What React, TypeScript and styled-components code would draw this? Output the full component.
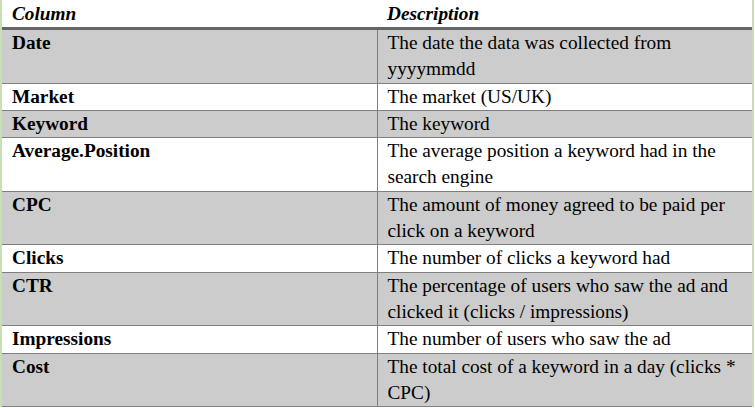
import React from "react";
import styled, { createGlobalStyle } from "styled-components";

const GlobalStyle = createGlobalStyle`
  body {
    margin: 0;
    background: #ffffff;
  }
`;

const Frame = styled.div`
  width: 750px;
  border-left: 2px solid #c5e0b3;
  border-right: 2px solid #c5e0b3;
`;

const Table = styled.table`
  width: 100%;
  table-layout: fixed;
  border-collapse: collapse;
  color: #000;
`;

const HeadCell = styled.th`
  font-family: "Liberation Serif", serif;
  font-size: 19.3px;
  font-style: italic;
  font-weight: bold;
  line-height: 27px;
  text-align: left;
  vertical-align: top;
  padding: 0 1px 0 10px;
  border-bottom: 3px solid #666666;
  &:first-child {
    width: 364px;
  }
`;

const Row = styled.tr<{ $shaded: boolean }>`
  background: ${(p) => (p.$shaded ? "#cccccc" : "#ffffff")};
`;

const NameCell = styled.td`
  font-family: "Liberation Serif", serif;
  font-size: 19.3px;
  font-weight: bold;
  line-height: 26.3px;
  vertical-align: top;
  padding: 0 1px 0 10px;
  border-bottom: 1px solid #7f7f7f;
  border-right: 1px solid #7f7f7f;
`;

const DescCell = styled.td`
  font-family: "Liberation Serif", serif;
  font-size: 19.3px;
  line-height: 26.3px;
  vertical-align: top;
  padding: 0 1px 0 10px;
  border-bottom: 1px solid #7f7f7f;
`;

const rows = [
  { name: "Date", desc: "The date the data was collected from yyyymmdd", shaded: true },
  { name: "Market", desc: "The market (US/UK)", shaded: false },
  { name: "Keyword", desc: "The keyword", shaded: true },
  {
    name: "Average.Position",
    desc: "The average position a keyword had in the search engine",
    shaded: false,
  },
  {
    name: "CPC",
    desc: "The amount of money agreed to be paid per click on a keyword",
    shaded: true,
  },
  { name: "Clicks", desc: "The number of clicks a keyword had", shaded: false },
  {
    name: "CTR",
    desc: "The percentage of users who saw the ad and clicked it (clicks / impressions)",
    shaded: true,
  },
  { name: "Impressions", desc: "The number of users who saw the ad", shaded: false },
  {
    name: "Cost",
    desc: "The total cost of a keyword in a day (clicks * CPC)",
    shaded: true,
  },
];

const App = () => {
  return (
    <>
      <GlobalStyle />
      <Frame>
        <Table>
          <thead>
            <tr>
              <HeadCell>Column</HeadCell>
              <HeadCell>Description</HeadCell>
            </tr>
          </thead>
          <tbody>
            {rows.map((r) => (
              <Row key={r.name} $shaded={r.shaded}>
                <NameCell>{r.name}</NameCell>
                <DescCell>{r.desc}</DescCell>
              </Row>
            ))}
          </tbody>
        </Table>
      </Frame>
    </>
  );
};

export default App;
